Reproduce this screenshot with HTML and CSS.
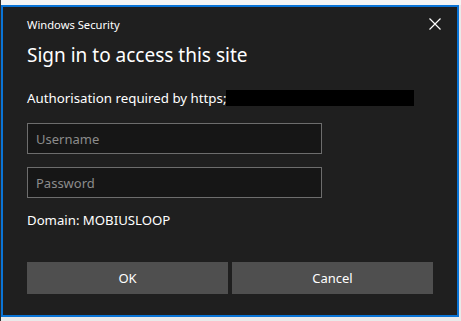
FILE: index.html
```html
<!DOCTYPE html>
<html>
<head>
<meta charset="utf-8">
<link rel="stylesheet" href="styles.css">
</head>
<body>
<div class="topstrip"></div>
<div class="dialog">
  <div class="header">
    <span class="app">Windows Security</span>
    <svg class="close" width="12" height="12" viewBox="0 0 12 12"><path d="M0.5 0.5 L11.5 11.5 M11.5 0.5 L0.5 11.5" stroke="#ffffff" stroke-width="1.2" fill="none"/></svg>
  </div>
  <div class="title">Sign in to access this site</div>
  <div class="auth">Authorisation required by https;<span class="redact"></span></div>
  <div class="field">Username</div>
  <div class="field second">Password</div>
  <div class="domain">Domain: MOBIUSLOOP</div>
  <div class="buttons">
    <div class="btn">OK</div>
    <div class="btn">Cancel</div>
  </div>
</div>
</body>
</html>
```

FILE: styles.css
```css
html, body {
  margin: 0;
  padding: 0;
}
body {
  width: 461px;
  height: 321px;
  background: #e9e9e9;
  font-family: "Noto Sans", "Open Sans", sans-serif;
  overflow: hidden;
  border-left: 1px solid #2a2a2a;
  box-sizing: border-box;
}
.topstrip {
  height: 5px;
  background: #f4f4f4;
}
.dialog {
  width: 458px;
  height: 312px;
  box-sizing: border-box;
  border: 2px solid #0a74d6;
  background: #1f1f1f;
  padding: 0 24px 0 24px;
  display: flex;
  flex-direction: column;
  color: #ffffff;
}
.header {
  height: 34px;
  display: flex;
  align-items: center;
  justify-content: space-between;
}
.app {
  font-size: 11.2px;
  color: #ffffff;
}
.close {
  margin-right: -8px;
}
.title {
  font-size: 19px;
  line-height: 28px;
  color: #ffffff;
}
.auth {
  margin-top: 19px;
  font-size: 13.3px;
  line-height: 20px;
  display: flex;
  align-items: center;
}
.redact {
  display: inline-block;
  width: 188px;
  height: 16px;
  background: #000000;
}
.field {
  margin-top: 15px;
  width: 295px;
  height: 31px;
  box-sizing: border-box;
  border: 1px solid #6d6d6d;
  background: #161616;
  color: #8c8c8c;
  font-size: 13px;
  padding-left: 8px;
  display: flex;
  align-items: center;
}
.field.second {
  margin-top: 13px;
}
.domain {
  margin-top: 12px;
  font-size: 13.2px;
  line-height: 20px;
}
.buttons {
  margin-top: 32px;
  display: flex;
  gap: 4px;
}
.btn {
  flex: 1;
  height: 32px;
  background: #4f4f4f;
  color: #ffffff;
  font-size: 13px;
  display: flex;
  align-items: center;
  justify-content: center;
}
```
